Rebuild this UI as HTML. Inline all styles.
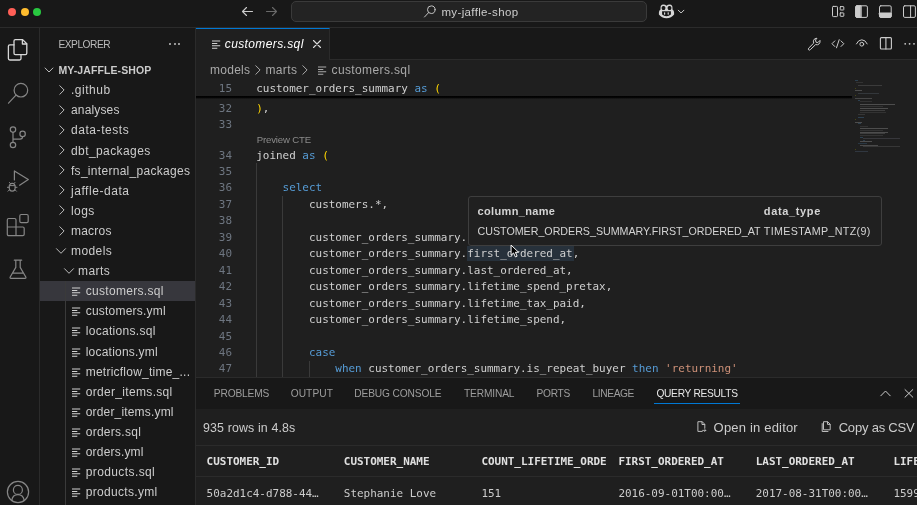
<!DOCTYPE html>
<html><head><meta charset="utf-8">
<style>
*{box-sizing:border-box;margin:0;padding:0}
html,body{width:917px;height:505px;overflow:hidden;background:#181818;}
body{position:relative;-webkit-font-smoothing:antialiased;font-family:"Liberation Sans",sans-serif;color:#ccc;font-size:12px;}
.a{position:absolute;white-space:pre;}
#root{left:0;top:0;width:917px;height:505px;will-change:transform;}
.m{font-family:"DejaVu Sans Mono","Liberation Mono",monospace;}
#title{left:0;top:0;width:917px;height:28px;background:#181818;border-bottom:1px solid #2b2b2b;}
#act{left:0;top:28px;width:40px;height:477px;background:#181818;border-right:1px solid #2b2b2b;}
#side{left:40px;top:28px;width:156px;height:477px;background:#181818;border-right:1px solid #2b2b2b;}
#tabs{left:196px;top:28px;width:721px;height:32px;background:#181818;border-bottom:1px solid #2b2b2b;}
#editor{left:196px;top:60px;width:721px;height:318px;background:#1f1f1f;overflow:hidden}
#panel{left:196px;top:377px;width:721px;height:128px;background:#181818;border-top:1px solid #2b2b2b;}
.tl{border-radius:50%;width:8px;height:8px;top:7.8px}
.tree{color:#ccc}
.ln{color:#6e7681;text-align:right;width:30px}
.code{color:#d0d0d0}
.k{color:#569cd6}.y{color:#ffd700}.s{color:#ce9178}
.guide{width:1px;background:#3a3a3a}
.ptab{color:#9d9d9d}
.th{font-weight:bold;color:#e0e0e0}
.td{color:#ccc}
svg{overflow:visible}
</style></head><body>
<div class="a" id="root">
<div class="a" id="title"></div>

<div class="a tl" style="left:8px;background:#ff5f57"></div>
<div class="a tl" style="left:20.5px;background:#febc2e"></div>
<div class="a tl" style="left:33px;background:#28c840"></div>
<svg class="a" style="left:240px;top:4px" width="40" height="16" viewBox="0 0 40 16" fill="none" stroke-width="1.1" stroke-linecap="round" stroke-linejoin="round">
<path d="M12.5 7.5H2.5M6.5 3.5L2.5 7.5L6.5 11.5" stroke="#ccc"/>
<path d="M26.5 7.5H36.5M32.5 3.5L36.5 7.5L32.5 11.5" stroke="#6a6a6a"/>
</svg>
<div class="a" style="left:291px;top:1px;width:356px;height:21px;border:1px solid #3a3a3a;border-radius:5px;background:#232323"></div>
<svg class="a" style="left:423px;top:5px" width="14" height="14" viewBox="0 0 14 14" fill="none" stroke="#c4c4c4" stroke-width="1" stroke-linecap="round"><circle cx="8.3" cy="4.7" r="3.8"/><path d="M5.6 7.6L1.5 12"/></svg>
<div id="t1" class="a" style="left:441.4px;top:3.5px;font-size:11.5px;line-height:16px;letter-spacing:0.360px;color:#ccc">my-jaffle-shop</div>
<div class="a" id="act"></div>
<div class="a" id="side"></div>
<div id="t2" class="a" style="left:58.4px;top:37.1px;font-size:10.2px;line-height:16px;letter-spacing:-0.457px;color:#bbb">EXPLORER</div>
<div class="a" style="left:167px;top:42px;width:14px;height:4px"><i class="a" style="left:2.2px;top:0.8px;width:1.8px;height:1.8px;border-radius:50%;background:#bbb"></i><i class="a" style="left:6.8px;top:0.8px;width:1.8px;height:1.8px;border-radius:50%;background:#bbb"></i><i class="a" style="left:11.4px;top:0.8px;width:1.8px;height:1.8px;border-radius:50%;background:#bbb"></i></div>
<svg class="a" style="left:44.2px;top:66px" width="10" height="8" viewBox="0 0 10 8" fill="none" stroke="#bcbcbc" stroke-width="1" stroke-linecap="round" stroke-linejoin="round"><path d="M1.1 2L5 6L8.9 2"/></svg>
<div id="t3" class="a" style="left:58.4px;top:60.0px;font-size:10.5px;line-height:20px;letter-spacing:0.093px;font-weight:bold;color:#ccc">MY-JAFFLE-SHOP</div>
<svg class="a" style="left:58px;top:84.8px" width="8" height="10" viewBox="0 0 8 10" fill="none" stroke="#bcbcbc" stroke-width="1" stroke-linecap="round" stroke-linejoin="round"><path d="M1.8 0.7L6.1 5L1.8 9.3"/></svg>
<div id="t4" class="a tree" style="left:71.0px;top:80.2px;font-size:12px;line-height:20px;letter-spacing:0.527px;">.github</div>
<svg class="a" style="left:58px;top:104.9px" width="8" height="10" viewBox="0 0 8 10" fill="none" stroke="#bcbcbc" stroke-width="1" stroke-linecap="round" stroke-linejoin="round"><path d="M1.8 0.7L6.1 5L1.8 9.3"/></svg>
<div id="t5" class="a tree" style="left:71.0px;top:100.3px;font-size:12px;line-height:20px;letter-spacing:0.148px;">analyses</div>
<svg class="a" style="left:58px;top:125.0px" width="8" height="10" viewBox="0 0 8 10" fill="none" stroke="#bcbcbc" stroke-width="1" stroke-linecap="round" stroke-linejoin="round"><path d="M1.8 0.7L6.1 5L1.8 9.3"/></svg>
<div id="t6" class="a tree" style="left:71.0px;top:120.4px;font-size:12px;line-height:20px;letter-spacing:0.556px;">data-tests</div>
<svg class="a" style="left:58px;top:145.1px" width="8" height="10" viewBox="0 0 8 10" fill="none" stroke="#bcbcbc" stroke-width="1" stroke-linecap="round" stroke-linejoin="round"><path d="M1.8 0.7L6.1 5L1.8 9.3"/></svg>
<div id="t7" class="a tree" style="left:71.0px;top:140.5px;font-size:12px;line-height:20px;letter-spacing:0.415px;">dbt_packages</div>
<svg class="a" style="left:58px;top:165.2px" width="8" height="10" viewBox="0 0 8 10" fill="none" stroke="#bcbcbc" stroke-width="1" stroke-linecap="round" stroke-linejoin="round"><path d="M1.8 0.7L6.1 5L1.8 9.3"/></svg>
<div id="t8" class="a tree" style="left:71.0px;top:160.6px;font-size:12px;line-height:20px;letter-spacing:0.289px;">fs_internal_packages</div>
<svg class="a" style="left:58px;top:185.3px" width="8" height="10" viewBox="0 0 8 10" fill="none" stroke="#bcbcbc" stroke-width="1" stroke-linecap="round" stroke-linejoin="round"><path d="M1.8 0.7L6.1 5L1.8 9.3"/></svg>
<div id="t9" class="a tree" style="left:71.0px;top:180.7px;font-size:12px;line-height:20px;letter-spacing:0.551px;">jaffle-data</div>
<svg class="a" style="left:58px;top:205.4px" width="8" height="10" viewBox="0 0 8 10" fill="none" stroke="#bcbcbc" stroke-width="1" stroke-linecap="round" stroke-linejoin="round"><path d="M1.8 0.7L6.1 5L1.8 9.3"/></svg>
<div id="t10" class="a tree" style="left:71.0px;top:200.8px;font-size:12px;line-height:20px;letter-spacing:0.426px;">logs</div>
<svg class="a" style="left:58px;top:225.5px" width="8" height="10" viewBox="0 0 8 10" fill="none" stroke="#bcbcbc" stroke-width="1" stroke-linecap="round" stroke-linejoin="round"><path d="M1.8 0.7L6.1 5L1.8 9.3"/></svg>
<div id="t11" class="a tree" style="left:71.0px;top:220.9px;font-size:12px;line-height:20px;letter-spacing:0.211px;">macros</div>
<svg class="a" style="left:56.1px;top:246.6px" width="10" height="8" viewBox="0 0 10 8" fill="none" stroke="#bcbcbc" stroke-width="1" stroke-linecap="round" stroke-linejoin="round"><path d="M0.5 1.7L5 6.3L9.5 1.7"/></svg>
<div id="t12" class="a tree" style="left:71.0px;top:241.0px;font-size:12px;line-height:20px;letter-spacing:0.421px;">models</div>
<svg class="a" style="left:63.7px;top:266.7px" width="10" height="8" viewBox="0 0 10 8" fill="none" stroke="#bcbcbc" stroke-width="1" stroke-linecap="round" stroke-linejoin="round"><path d="M0.5 1.7L5 6.3L9.5 1.7"/></svg>
<div id="t13" class="a tree" style="left:78.0px;top:261.1px;font-size:12px;line-height:20px;letter-spacing:0.450px;">marts</div>
<div class="a" style="left:40px;top:280.8px;width:154.5px;height:20.5px;background:#37373d"></div>
<svg class="a" style="left:72.3px;top:287.2px" width="9" height="9" viewBox="0 0 9 9" fill="none" stroke="#d2d2d2" stroke-width="1.05"><path d="M0 1H8.2M0 3.4H5.3M0 5.8H8.2M0 8.2H5.3"/></svg>
<div id="t14" class="a tree" style="left:85.7px;top:281.2px;font-size:12px;line-height:20px;letter-spacing:0.306px;">customers.sql</div>
<svg class="a" style="left:72.3px;top:307.3px" width="9" height="9" viewBox="0 0 9 9" fill="none" stroke="#d2d2d2" stroke-width="1.05"><path d="M0 1H8.2M0 3.4H5.3M0 5.8H8.2M0 8.2H5.3"/></svg>
<div id="t15" class="a tree" style="left:85.7px;top:301.3px;font-size:12px;line-height:20px;letter-spacing:0.221px;">customers.yml</div>
<svg class="a" style="left:72.3px;top:327.4px" width="9" height="9" viewBox="0 0 9 9" fill="none" stroke="#d2d2d2" stroke-width="1.05"><path d="M0 1H8.2M0 3.4H5.3M0 5.8H8.2M0 8.2H5.3"/></svg>
<div id="t16" class="a tree" style="left:85.7px;top:321.4px;font-size:12px;line-height:20px;letter-spacing:0.304px;">locations.sql</div>
<svg class="a" style="left:72.3px;top:347.5px" width="9" height="9" viewBox="0 0 9 9" fill="none" stroke="#d2d2d2" stroke-width="1.05"><path d="M0 1H8.2M0 3.4H5.3M0 5.8H8.2M0 8.2H5.3"/></svg>
<div id="t17" class="a tree" style="left:85.7px;top:341.5px;font-size:12px;line-height:20px;letter-spacing:0.220px;">locations.yml</div>
<svg class="a" style="left:72.3px;top:367.6px" width="9" height="9" viewBox="0 0 9 9" fill="none" stroke="#d2d2d2" stroke-width="1.05"><path d="M0 1H8.2M0 3.4H5.3M0 5.8H8.2M0 8.2H5.3"/></svg>
<div id="t18" class="a tree" style="left:85.7px;top:361.6px;font-size:12px;line-height:20px;letter-spacing:0.237px;">metricflow_time_...</div>
<svg class="a" style="left:72.3px;top:387.7px" width="9" height="9" viewBox="0 0 9 9" fill="none" stroke="#d2d2d2" stroke-width="1.05"><path d="M0 1H8.2M0 3.4H5.3M0 5.8H8.2M0 8.2H5.3"/></svg>
<div id="t19" class="a tree" style="left:85.7px;top:381.7px;font-size:12px;line-height:20px;letter-spacing:0.326px;">order_items.sql</div>
<svg class="a" style="left:72.3px;top:407.8px" width="9" height="9" viewBox="0 0 9 9" fill="none" stroke="#d2d2d2" stroke-width="1.05"><path d="M0 1H8.2M0 3.4H5.3M0 5.8H8.2M0 8.2H5.3"/></svg>
<div id="t20" class="a tree" style="left:85.7px;top:401.8px;font-size:12px;line-height:20px;letter-spacing:0.174px;">order_items.yml</div>
<svg class="a" style="left:72.3px;top:427.9px" width="9" height="9" viewBox="0 0 9 9" fill="none" stroke="#d2d2d2" stroke-width="1.05"><path d="M0 1H8.2M0 3.4H5.3M0 5.8H8.2M0 8.2H5.3"/></svg>
<div id="t21" class="a tree" style="left:85.7px;top:421.9px;font-size:12px;line-height:20px;letter-spacing:0.278px;">orders.sql</div>
<svg class="a" style="left:72.3px;top:448.0px" width="9" height="9" viewBox="0 0 9 9" fill="none" stroke="#d2d2d2" stroke-width="1.05"><path d="M0 1H8.2M0 3.4H5.3M0 5.8H8.2M0 8.2H5.3"/></svg>
<div id="t22" class="a tree" style="left:85.7px;top:442.0px;font-size:12px;line-height:20px;letter-spacing:0.198px;">orders.yml</div>
<svg class="a" style="left:72.3px;top:468.1px" width="9" height="9" viewBox="0 0 9 9" fill="none" stroke="#d2d2d2" stroke-width="1.05"><path d="M0 1H8.2M0 3.4H5.3M0 5.8H8.2M0 8.2H5.3"/></svg>
<div id="t23" class="a tree" style="left:85.7px;top:462.1px;font-size:12px;line-height:20px;letter-spacing:0.399px;">products.sql</div>
<svg class="a" style="left:72.3px;top:488.2px" width="9" height="9" viewBox="0 0 9 9" fill="none" stroke="#d2d2d2" stroke-width="1.05"><path d="M0 1H8.2M0 3.4H5.3M0 5.8H8.2M0 8.2H5.3"/></svg>
<div id="t24" class="a tree" style="left:85.7px;top:482.2px;font-size:12px;line-height:20px;letter-spacing:0.315px;">products.yml</div>
<div class="a" style="left:65px;top:280.8px;width:1px;height:224.2px;background:#3a3a3a"></div>
<svg class="a" style="left:0;top:28px" width="40" height="477" viewBox="0 28 40 477" fill="none" stroke="#868686" stroke-width="1.2" stroke-linecap="round" stroke-linejoin="round">
<g stroke="#d7d7d7" stroke-width="1.3">
<path d="M15.4 39.6H22.6L26.8 43.8V53.2Q26.8 54.6 25.4 54.6H15.4Q14 54.6 14 53.2V41Q14 39.6 15.4 39.6Z"/>
<path d="M22.4 39.8V44H26.6"/>
<path d="M14 44.8H9.8Q8.4 44.8 8.4 46.2V58.6Q8.4 60 9.8 60H19.6Q21 60 21 58.6V54.8"/>
</g>
<circle cx="20.9" cy="90.2" r="6.8"/>
<path d="M16 95.2L8.5 103.2"/>
<circle cx="13" cy="129.6" r="2.7"/><circle cx="13" cy="145" r="2.7"/><circle cx="22.6" cy="133.9" r="2.7"/>
<path d="M13 132.3V142.3M22.6 136.6Q22.6 139.2 20 139.2H13"/>
<path d="M14.4 180V170.9L28.3 179.6L19.6 185.2"/>
<ellipse cx="12.2" cy="187.3" rx="3" ry="3.9"/>
<path d="M9.6 185.6H14.8M10.5 183.6L9.4 182.4M13.9 183.6L15 182.4M9.2 187.3H7.4M15.2 187.3H17M9.6 189.6L8 191.2M14.8 189.6L16.4 191.2" stroke-width="1"/>
<path d="M8.7 218.5H14.6Q16 218.5 16 219.9V227H22.8Q24.2 227 24.2 228.4V234.2Q24.2 235.6 22.8 235.6H8.7Q7.3 235.6 7.3 234.2V219.9Q7.3 218.5 8.7 218.5ZM7.3 227H16V235.6"/>
<rect x="19.8" y="214.5" width="8.4" height="8.2" rx="1.4"/>
<path d="M14.3 260.2H21.7M15.8 260.4V267.4L10.2 277Q9.6 278.4 11 278.4H25Q26.4 278.4 25.8 277L20.2 267.4V260.4M12.4 273.2H23.6"/>
<circle cx="18" cy="492" r="10.6"/>
<circle cx="17.9" cy="489.9" r="4.5"/>
<path d="M11.8 500.4Q12.6 494.6 17.9 494.6Q23.2 494.6 24.2 500.4"/>
</svg>
<div class="a" id="tabs"></div>
<div class="a" id="editor"></div>
<div class="a" id="panel"></div>
<div class="a" style="left:196px;top:28px;width:133.5px;height:32px;background:#1f1f1f;border-top:1px solid #0078d4;border-right:1px solid #2b2b2b"></div>
<svg class="a" style="left:212px;top:40px" width="9" height="9" viewBox="0 0 9 9" fill="none" stroke="#d2d2d2" stroke-width="1.05"><path d="M0 1H8.2M0 3.4H5.3M0 5.8H8.2M0 8.2H5.3"/></svg>
<div id="t25" class="a" style="left:224.8px;top:36.4px;font-size:12px;line-height:16px;letter-spacing:0.373px;font-style:italic;color:#fff">customers.sql</div>
<svg class="a" style="left:312.6px;top:40px" width="8" height="8" viewBox="0 0 8 8" stroke="#ddd" stroke-width="1.1" stroke-linecap="round"><path d="M0.5 0.5L7.5 7.5M7.5 0.5L0.5 7.5"/></svg>
<svg class="a" style="left:650px;top:0" width="267" height="60" viewBox="650 0 267 60" fill="none" stroke="#ccc" stroke-width="1.1" stroke-linecap="round" stroke-linejoin="round">
<g stroke="none">
<path d="M663.2 4.5Q665.4 4.5 666.5 5.8Q667.6 4.5 669.8 4.5Q672.6 4.5 672.5 8.2V9.6Q674.1 10.8 674.1 12.4V14.6Q671.4 18.2 666.5 18.2Q661.6 18.2 658.9 14.6V12.4Q658.9 10.8 660.5 9.6V8.2Q660.4 4.5 663.2 4.5Z" fill="#d6d6d6"/>
<rect x="661.7" y="5.9" width="3.6" height="4.1" rx="1.5" fill="#181818"/>
<rect x="667.7" y="5.9" width="3.6" height="4.1" rx="1.5" fill="#181818"/>
<path d="M662.1 11.3H670.9V14.6Q669 16.2 666.5 16.2Q664 16.2 662.1 14.6Z" fill="#181818"/>
<rect x="664" y="12.3" width="1.2" height="2.4" rx="0.4" fill="#d6d6d6"/>
<rect x="667.6" y="12.3" width="1.2" height="2.4" rx="0.4" fill="#d6d6d6"/>
</g>
<path d="M678.3 10.2L681.1 13L683.9 10.2" stroke-width="1"/>
<g stroke-width="1">
<rect x="832.5" y="6.4" width="5" height="10.2" rx="0.8"/>
<rect x="840.2" y="6.6" width="3.6" height="3.4" rx="0.4"/>
<rect x="840.2" y="12.9" width="3.6" height="3.4" rx="0.4"/>
<rect x="855.7" y="5.8" width="11.7" height="11.6" rx="1.3"/>
<path d="M860.8 5.8H857Q855.7 5.8 855.7 7.1V16.1Q855.7 17.4 857 17.4H860.8Z" fill="#ccc"/>
<rect x="879.5" y="5.8" width="11.7" height="11.6" rx="1.3"/>
<path d="M879.5 13H891.2V16.1Q891.2 17.4 889.9 17.4H880.8Q879.5 17.4 879.5 16.1Z" fill="#ccc"/>
<rect x="903.5" y="5.8" width="11.9" height="11.6" rx="1.3"/>
<path d="M910.6 5.8V17.4"/>
</g>
<path d="M816.6 38.2Q814 38.2 813.4 40.8Q813.2 42 813.8 43L808.6 48.2Q808 49.4 808.8 50Q809.6 50.4 810.4 49.6L815.6 44.6Q817.6 45.2 819 44Q820.4 42.6 820 40.4L817.8 42.6L816 42.2L815.6 40.4Z" stroke-width="1"/>
<path d="M834.8 40.9L832 43.7L834.8 46.5M841 40.9L843.8 43.7L841 46.5M839.2 39.7L836.5 47.8" stroke-width="1"/>
<path d="M856.4 43.9Q858.3 39.8 861.8 39.8Q865.3 39.8 867.2 43.9" stroke-width="1"/>
<circle cx="861.8" cy="44.2" r="1.9" stroke-width="1"/>
<rect x="880.4" y="37.6" width="11" height="11.4" rx="1"/>
<path d="M885.9 37.6V49"/>
<g fill="#ccc" stroke="none"><circle cx="905.2" cy="43.8" r="0.9"/><circle cx="909.6" cy="43.8" r="0.9"/><circle cx="914" cy="43.8" r="0.9"/></g>
</svg>
<div id="t26" class="a" style="left:210.0px;top:62.0px;font-size:12px;line-height:16px;letter-spacing:0.263px;color:#a9a9a9">models</div>
<svg class="a" style="left:254.4px;top:65px" width="8" height="10" viewBox="0 0 8 10" fill="none" stroke="#a9a9a9" stroke-width="1" stroke-linecap="round" stroke-linejoin="round"><path d="M1.8 0.7L6.1 5L1.8 9.3"/></svg>
<div id="t27" class="a" style="left:265.4px;top:62.0px;font-size:12px;line-height:16px;letter-spacing:0.400px;color:#a9a9a9">marts</div>
<svg class="a" style="left:300.9px;top:65px" width="8" height="10" viewBox="0 0 8 10" fill="none" stroke="#a9a9a9" stroke-width="1" stroke-linecap="round" stroke-linejoin="round"><path d="M1.8 0.7L6.1 5L1.8 9.3"/></svg>
<svg class="a" style="left:318.3px;top:66px" width="9" height="9" viewBox="0 0 9 9" fill="none" stroke="#a9a9a9" stroke-width="1.05"><path d="M0 1H8.2M0 3.4H5.3M0 5.8H8.2M0 8.2H5.3"/></svg>
<div id="t28" class="a" style="left:331.5px;top:62.0px;font-size:12px;line-height:16px;letter-spacing:0.381px;color:#a9a9a9">customers.sql</div>
<div class="a" style="left:467.4px;top:245.8px;width:106.4px;height:15.4px;background:#27313b"></div>
<div class="a" style="left:196px;top:60px;width:721px;height:317px;overflow:hidden">
<div id="t29" class="a m ln" style="left:6.0px;top:21.0px;font-size:10.96px;line-height:16px;">15</div>
<div id="t30" class="a m code" style="left:60.2px;top:21.0px;font-size:10.96px;line-height:16px;">customer_orders_summary <span class="k">as</span> <span class="y">(</span></div>
<div id="t31" class="a m ln" style="left:6.0px;top:41.3px;font-size:10.96px;line-height:16px;">32</div>
<div id="t32" class="a m code" style="left:60.2px;top:41.3px;font-size:10.96px;line-height:16px;"><span class="y">)</span>,</div>
<div id="t33" class="a m ln" style="left:6.0px;top:57.4px;font-size:10.96px;line-height:16px;">33</div>
<div id="t34" class="a m ln" style="left:6.0px;top:87.6px;font-size:10.96px;line-height:16px;">34</div>
<div id="t35" class="a m code" style="left:60.2px;top:87.6px;font-size:10.96px;line-height:16px;">joined <span class="k">as</span> <span class="y">(</span></div>
<div id="t36" class="a m ln" style="left:6.0px;top:104.0px;font-size:10.96px;line-height:16px;">35</div>
<div id="t37" class="a m ln" style="left:6.0px;top:120.2px;font-size:10.96px;line-height:16px;">36</div>
<div id="t38" class="a m code" style="left:60.2px;top:120.2px;font-size:10.96px;line-height:16px;">    <span class="k">select</span></div>
<div id="t39" class="a m ln" style="left:6.0px;top:137.0px;font-size:10.96px;line-height:16px;">37</div>
<div id="t40" class="a m code" style="left:60.2px;top:137.0px;font-size:10.96px;line-height:16px;">        customers.*,</div>
<div id="t41" class="a m ln" style="left:6.0px;top:153.2px;font-size:10.96px;line-height:16px;">38</div>
<div id="t42" class="a m ln" style="left:6.0px;top:169.7px;font-size:10.96px;line-height:16px;">39</div>
<div id="t43" class="a m code" style="left:60.2px;top:169.7px;font-size:10.96px;line-height:16px;">        customer_orders_summary.</div>
<div id="t44" class="a m ln" style="left:6.0px;top:186.1px;font-size:10.96px;line-height:16px;">40</div>
<div id="t45" class="a m code" style="left:60.2px;top:186.1px;font-size:10.96px;line-height:16px;">        customer_orders_summary.first_ordered_at,</div>
<div id="t46" class="a m ln" style="left:6.0px;top:202.6px;font-size:10.96px;line-height:16px;">41</div>
<div id="t47" class="a m code" style="left:60.2px;top:202.6px;font-size:10.96px;line-height:16px;">        customer_orders_summary.last_ordered_at,</div>
<div id="t48" class="a m ln" style="left:6.0px;top:219.1px;font-size:10.96px;line-height:16px;">42</div>
<div id="t49" class="a m code" style="left:60.2px;top:219.1px;font-size:10.96px;line-height:16px;">        customer_orders_summary.lifetime_spend_pretax,</div>
<div id="t50" class="a m ln" style="left:6.0px;top:235.6px;font-size:10.96px;line-height:16px;">43</div>
<div id="t51" class="a m code" style="left:60.2px;top:235.6px;font-size:10.96px;line-height:16px;">        customer_orders_summary.lifetime_tax_paid,</div>
<div id="t52" class="a m ln" style="left:6.0px;top:252.1px;font-size:10.96px;line-height:16px;">44</div>
<div id="t53" class="a m code" style="left:60.2px;top:252.1px;font-size:10.96px;line-height:16px;">        customer_orders_summary.lifetime_spend,</div>
<div id="t54" class="a m ln" style="left:6.0px;top:268.5px;font-size:10.96px;line-height:16px;">45</div>
<div id="t55" class="a m ln" style="left:6.0px;top:285.0px;font-size:10.96px;line-height:16px;">46</div>
<div id="t56" class="a m code" style="left:60.2px;top:285.0px;font-size:10.96px;line-height:16px;">        <span class="k">case</span></div>
<div id="t57" class="a m ln" style="left:6.0px;top:301.0px;font-size:10.96px;line-height:16px;">47</div>
<div id="t58" class="a m code" style="left:60.2px;top:301.0px;font-size:10.96px;line-height:16px;">            <span class="k">when</span> customer_orders_summary.is_repeat_buyer <span class="k">then</span> <span class="s">'returning'</span></div>
<div class="a guide" style="left:60px;top:103.4px;height:216px"></div>
<div class="a guide" style="left:86px;top:136px;height:183px"></div>
<div class="a guide" style="left:113px;top:301px;height:19px"></div>
</div>
<div class="a" style="left:196px;top:95.8px;width:655.8px;height:3px;background:linear-gradient(#000 0,#050505 50%,rgba(0,0,0,0) 100%)"></div>
<div id="t59" class="a" style="left:256.7px;top:133.6px;font-size:9.6px;line-height:12px;letter-spacing:-0.149px;color:#8b8b8b">Preview CTE</div>
<div class="a" style="left:0;top:0;width:917px;height:160px"><i class="a" style="left:855px;top:79.8px;width:2.5px;height:1px;background:#569cd6;opacity:0.27"></i><i class="a" style="left:856px;top:81.5px;width:7.0px;height:1px;background:#888;opacity:0.18"></i><i class="a" style="left:857.5px;top:85.1px;width:24.9px;height:1px;background:#9a9a9a;opacity:0.23"></i><i class="a" style="left:855px;top:87.5px;width:1.0px;height:1px;background:#cc0;opacity:0.23"></i><i class="a" style="left:855px;top:90.1px;width:6.6px;height:1px;background:#ccc;opacity:0.27"></i><i class="a" style="left:857.5px;top:92.6px;width:21.5px;height:1px;background:#7a8a9a;opacity:0.23"></i><i class="a" style="left:855px;top:94.8px;width:1.0px;height:1px;background:#cc0;opacity:0.23"></i><i class="a" style="left:855px;top:97.8px;width:17.4px;height:1px;background:#bbb;opacity:0.25"></i><i class="a" style="left:857.5px;top:99.5px;width:2.5px;height:1px;background:#569cd6;opacity:0.27"></i><i class="a" style="left:860px;top:101.1px;width:11.6px;height:1px;background:#888;opacity:0.18"></i><i class="a" style="left:860px;top:104.2px;width:35.0px;height:1px;background:#ccc;opacity:0.27"></i><i class="a" style="left:860px;top:106.2px;width:23.0px;height:1px;background:#888;opacity:0.18"></i><i class="a" style="left:860px;top:108.4px;width:28.0px;height:1px;background:#ccc;opacity:0.27"></i><i class="a" style="left:860px;top:110.0px;width:25.0px;height:1px;background:#aaa;opacity:0.23"></i><i class="a" style="left:860px;top:111.7px;width:25.7px;height:1px;background:#888;opacity:0.18"></i><i class="a" style="left:857.5px;top:113.9px;width:7.5px;height:1px;background:#888;opacity:0.23"></i><i class="a" style="left:857.5px;top:117.0px;width:6.5px;height:1px;background:#569cd6;opacity:0.27"></i><i class="a" style="left:855px;top:118.7px;width:1.0px;height:1px;background:#cc0;opacity:0.23"></i><i class="a" style="left:855px;top:121.7px;width:6.6px;height:1px;background:#ccc;opacity:0.27"></i><i class="a" style="left:857.5px;top:123.3px;width:3.5px;height:1px;background:#569cd6;opacity:0.27"></i><i class="a" style="left:860px;top:125.5px;width:7.5px;height:1px;background:#888;opacity:0.18"></i><i class="a" style="left:860px;top:127.7px;width:28.0px;height:1px;background:#ccc;opacity:0.27"></i><i class="a" style="left:860px;top:129.5px;width:23.0px;height:1px;background:#888;opacity:0.18"></i><i class="a" style="left:860px;top:131.6px;width:28.0px;height:1px;background:#ccc;opacity:0.27"></i><i class="a" style="left:860px;top:133.3px;width:25.0px;height:1px;background:#aaa;opacity:0.23"></i><i class="a" style="left:860px;top:135.0px;width:23.0px;height:1px;background:#888;opacity:0.18"></i><i class="a" style="left:860px;top:136.6px;width:2.5px;height:1px;background:#569cd6;opacity:0.27"></i><i class="a" style="left:862.5px;top:137.8px;width:37.5px;height:1px;background:#8a8a9a;opacity:0.23"></i><i class="a" style="left:862.5px;top:139.5px;width:2.5px;height:1px;background:#569cd6;opacity:0.23"></i><i class="a" style="left:860px;top:140.8px;width:12.4px;height:1px;background:#ccc;opacity:0.27"></i><i class="a" style="left:857.5px;top:142.5px;width:9.1px;height:1px;background:#569cd6;opacity:0.20"></i><i class="a" style="left:860px;top:144.6px;width:18.0px;height:1px;background:#ccc;opacity:0.25"></i><i class="a" style="left:862.5px;top:146.1px;width:37.5px;height:1px;background:#999;opacity:0.20"></i><i class="a" style="left:855px;top:149.1px;width:1.0px;height:1px;background:#cc0;opacity:0.23"></i><i class="a" style="left:855px;top:151.2px;width:12.5px;height:1px;background:#6a8ab0;opacity:0.23"></i></div>
<div class="a" style="left:467.5px;top:196px;width:414.5px;height:49.5px;background:#202020;border:1px solid #3e3e3e;border-radius:3px"></div>
<div id="t60" class="a" style="left:477.6px;top:203.5px;font-size:11px;line-height:14px;letter-spacing:0.342px;font-weight:bold;color:#d4d4d4">column_name</div>
<div id="t61" class="a" style="left:763.8px;top:203.5px;font-size:11px;line-height:14px;letter-spacing:0.643px;font-weight:bold;color:#d4d4d4">data_type</div>
<div id="t62" class="a" style="left:477.6px;top:224.4px;font-size:10.7px;line-height:14px;letter-spacing:-0.017px;color:#d4d4d4">CUSTOMER_ORDERS_SUMMARY.FIRST_ORDERED_AT</div>
<div id="t63" class="a" style="left:763.8px;top:224.4px;font-size:10.7px;line-height:14px;letter-spacing:0.344px;color:#d4d4d4">TIMESTAMP_NTZ(9)</div>
<svg class="a" style="left:509.5px;top:243.6px" width="9.7" height="14" viewBox="0 0 9 13"><path d="M1 1V10.4L3.3 8.3L5 12L6.6 11.3L5 7.7H8Z" fill="#000" stroke="#fff" stroke-width="0.9" stroke-linejoin="round"/></svg>
<div class="a" style="left:196px;top:408.5px;width:721px;height:97px;background:#1f1f1f"></div>
<div id="t64" class="a ptab" style="left:213.8px;top:387.3px;font-size:10.2px;line-height:14px;letter-spacing:-0.159px;">PROBLEMS</div>
<div id="t65" class="a ptab" style="left:290.7px;top:387.3px;font-size:10.2px;line-height:14px;letter-spacing:0.062px;">OUTPUT</div>
<div id="t66" class="a ptab" style="left:354.3px;top:387.3px;font-size:10.2px;line-height:14px;letter-spacing:-0.140px;">DEBUG CONSOLE</div>
<div id="t67" class="a ptab" style="left:464.0px;top:387.3px;font-size:10.2px;line-height:14px;letter-spacing:-0.146px;">TERMINAL</div>
<div id="t68" class="a ptab" style="left:536.5px;top:387.3px;font-size:10.2px;line-height:14px;letter-spacing:-0.280px;">PORTS</div>
<div id="t69" class="a ptab" style="left:592.5px;top:387.3px;font-size:10.2px;line-height:14px;letter-spacing:-0.379px;">LINEAGE</div>
<div id="t70" class="a" style="left:656.4px;top:387.3px;font-size:10.2px;line-height:14px;letter-spacing:-0.277px;color:#e7e7e7">QUERY RESULTS</div>
<div class="a" style="left:654px;top:402.8px;width:85.8px;height:1.2px;background:#0078d4"></div>
<svg class="a" style="left:880px;top:388px" width="36" height="12" viewBox="880 388 36 12" fill="none" stroke="#ccc" stroke-width="1" stroke-linecap="round" stroke-linejoin="round"><path d="M880.8 395.8L885.5 391L890.2 395.8M905 389.6L912.8 397.2M912.8 389.6L905 397.2"/></svg>
<div id="t71" class="a" style="left:203.1px;top:419.9px;font-size:12.4px;line-height:16px;letter-spacing:0.124px;color:#ccc">935 rows in 4.8s</div>
<svg class="a" style="left:697px;top:421px" width="140" height="12" viewBox="697 421 140 12" fill="none" stroke="#bdbdbd" stroke-width="1" stroke-linejoin="round" stroke-linecap="round"><path d="M702.2 431.4H697.9V421.7H702.2L704.8 424.3V428.2M702 421.9V424.5H704.6"/><path d="M702.6 430.4H705.8M704.6 429.2L705.8 430.4L704.6 431.6" stroke-width="0.9"/><path d="M822.2 423.6V431.5H828M823.9 421.7H827.7L830.2 424.2V429.8H823.9ZM827.5 421.9V424.4H830"/></svg>
<div id="t72" class="a" style="left:713.6px;top:419.5px;font-size:13px;line-height:16px;letter-spacing:0.187px;color:#ccc">Open in editor</div>
<div id="t73" class="a" style="left:838.7px;top:419.5px;font-size:13px;line-height:16px;letter-spacing:-0.204px;color:#ccc">Copy as CSV</div>
<div class="a" style="left:196px;top:444.6px;width:721px;height:1px;background:#2b2b2b"></div>
<div class="a" style="left:196px;top:476px;width:721px;height:1px;background:#2b2b2b"></div>
<div id="t74" class="a m th" style="left:206.6px;top:454.6px;font-size:10.96px;line-height:14px;">CUSTOMER_ID</div>
<div id="t75" class="a m th" style="left:343.8px;top:454.6px;font-size:10.96px;line-height:14px;">CUSTOMER_NAME</div>
<div id="t76" class="a m th" style="left:481.4px;top:454.6px;font-size:10.96px;line-height:14px;">COUNT_LIFETIME_ORDE</div>
<div id="t77" class="a m th" style="left:618.4px;top:454.6px;font-size:10.96px;line-height:14px;">FIRST_ORDERED_AT</div>
<div id="t78" class="a m th" style="left:755.7px;top:454.6px;font-size:10.96px;line-height:14px;">LAST_ORDERED_AT</div>
<div id="t79" class="a m th" style="left:893.4px;top:454.6px;font-size:10.96px;line-height:14px;">LIFE</div>
<div id="t80" class="a m td" style="left:206.6px;top:486.8px;font-size:10.96px;line-height:14px;">50a2d1c4-d788-44…</div>
<div id="t81" class="a m td" style="left:343.8px;top:486.8px;font-size:10.96px;line-height:14px;">Stephanie Love</div>
<div id="t82" class="a m td" style="left:481.4px;top:486.8px;font-size:10.96px;line-height:14px;">151</div>
<div id="t83" class="a m td" style="left:618.4px;top:486.8px;font-size:10.96px;line-height:14px;">2016-09-01T00:00…</div>
<div id="t84" class="a m td" style="left:755.7px;top:486.8px;font-size:10.96px;line-height:14px;">2017-08-31T00:00…</div>
<div id="t85" class="a m td" style="left:893.4px;top:486.8px;font-size:10.96px;line-height:14px;">1599</div>
</div>
</body></html>
